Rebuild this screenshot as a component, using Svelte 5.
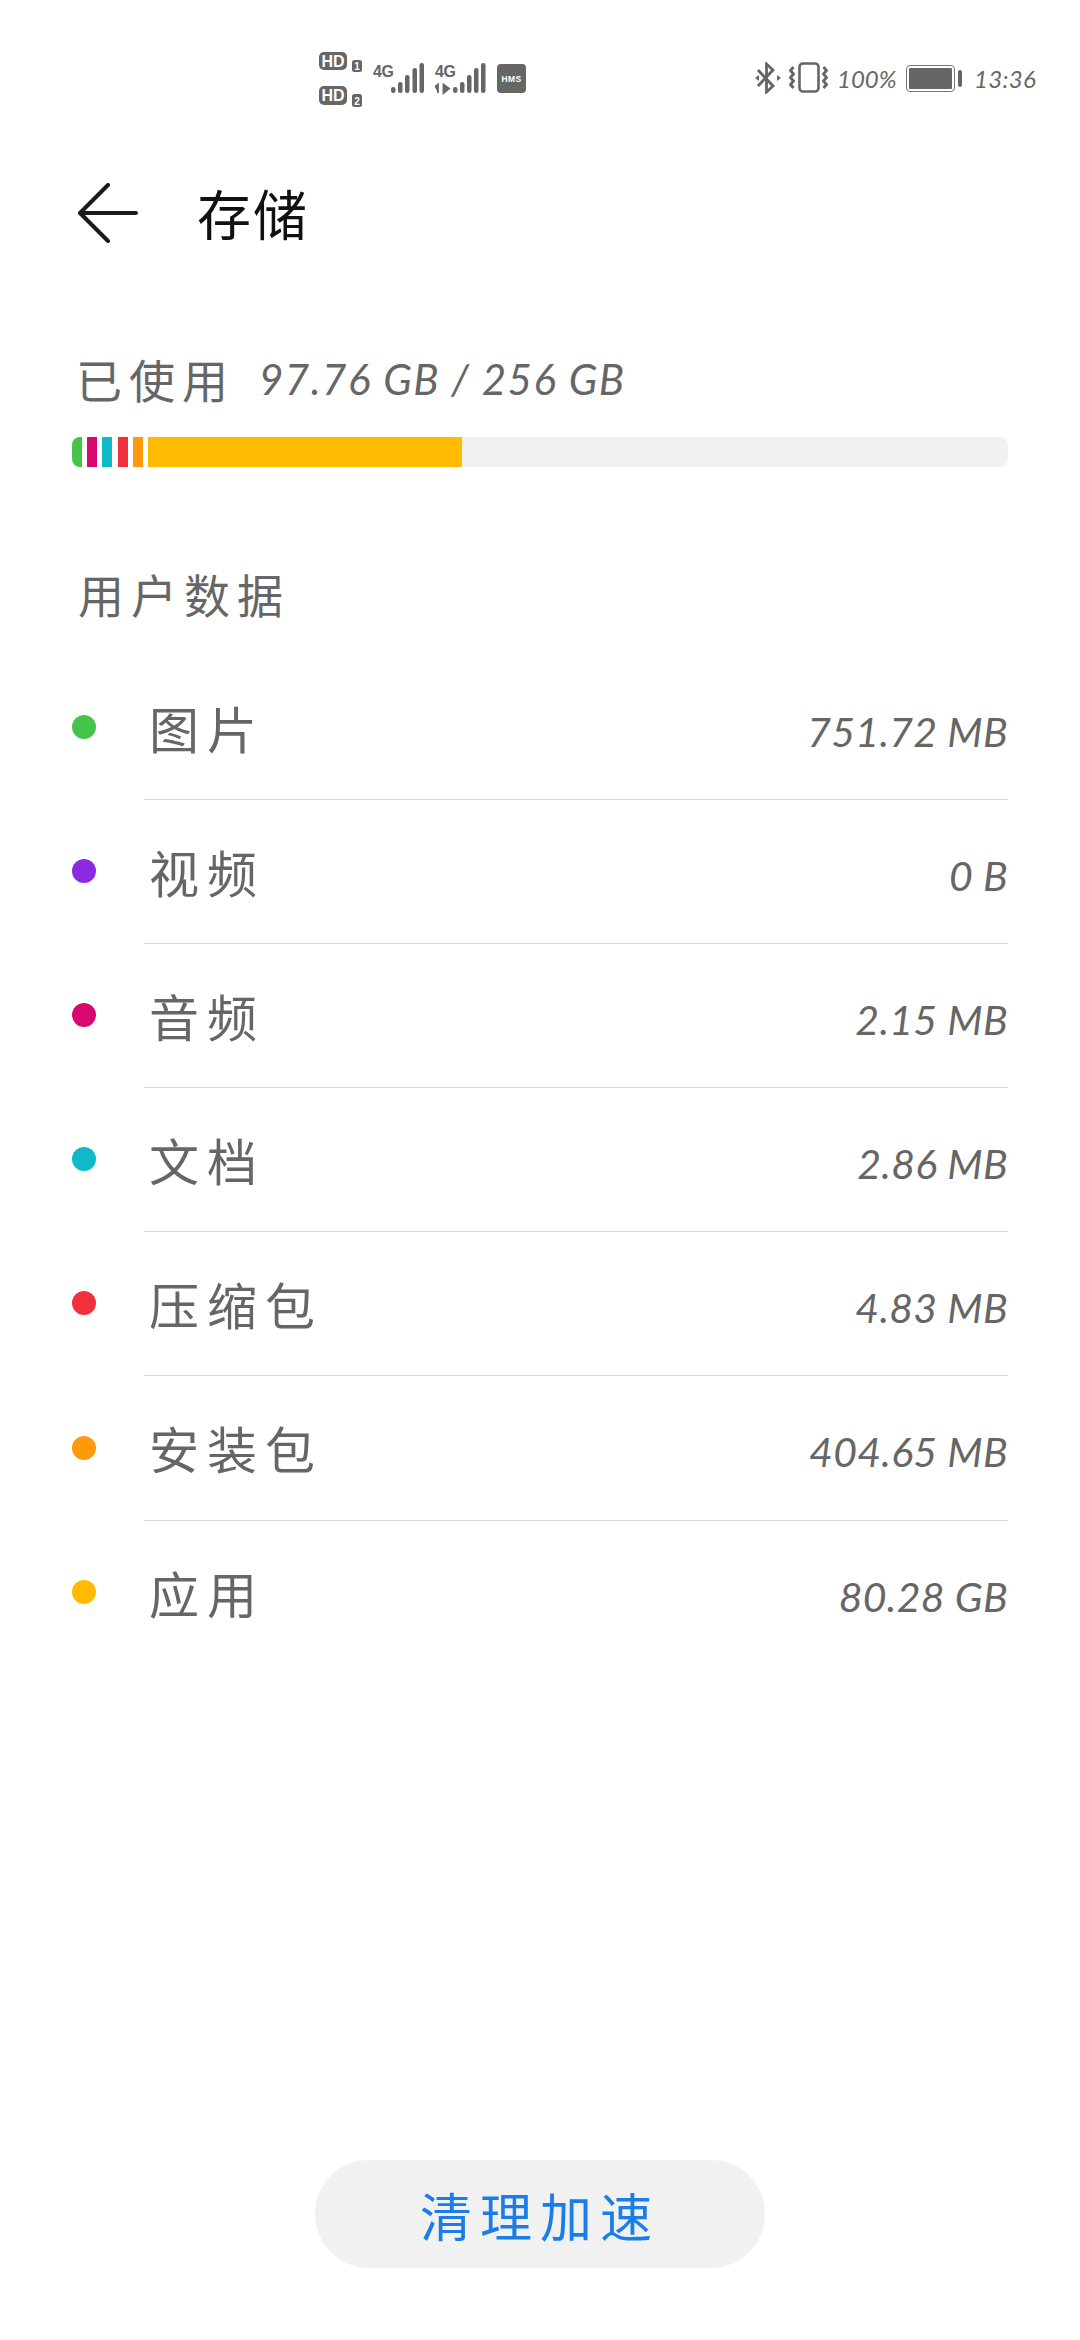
<script>
  const segs = [
    { c: '#45c34a', w: 10 },
    { c: '#d9086f', w: 10 },
    { c: '#0fb9c7', w: 10 },
    { c: '#f0303a', w: 10 },
    { c: '#ff9a0d', w: 10 },
    { c: '#ffbb00', w: 314 }
  ];
  const rows = [
    { c: '#45c34a', n: '图片', v: '751.72 MB' },
    { c: '#8a2be2', n: '视频', v: '0 B' },
    { c: '#d9086f', n: '音频', v: '2.15 MB' },
    { c: '#0fb9c7', n: '文档', v: '2.86 MB' },
    { c: '#f0303a', n: '压缩包', v: '4.83 MB' },
    { c: '#ff9a0d', n: '安装包', v: '404.65 MB' },
    { c: '#ffbb00', n: '应用', v: '80.28 GB' }
  ];
</script>

<div class="page">
  <div class="status">
    <svg class="sig" width="212" height="60" viewBox="0 0 212 60">
      <rect x="0" y="1" width="28" height="18" rx="5" fill="#666" />
      <text x="14" y="15.500" class="t hd">HD</text>
      <rect x="33" y="9" width="10" height="12" rx="2.5" fill="#666" />
      <text x="38" y="19" class="t small">1</text>
      <rect x="0" y="35" width="28" height="19" rx="5" fill="#666" />
      <text x="14" y="50" class="t hd">HD</text>
      <rect x="33" y="43" width="10" height="13" rx="2.5" fill="#666" />
      <text x="38" y="53.500" class="t small">2</text>

      <text x="54" y="26" class="g">4G</text>
      <g fill="#666">
        <rect x="72" y="36" width="4.500" height="6" rx="2.200" />
        <rect x="79" y="31" width="4.500" height="11" rx="2.200" />
        <rect x="86" y="24" width="4.500" height="18" rx="2.200" />
        <rect x="93.500" y="17" width="4.500" height="25" rx="2.200" />
        <rect x="100.500" y="12" width="4.500" height="30" rx="2.200" />
      </g>

      <text x="116" y="26" class="g">4G</text>
      <path d="M116 36l3-2.500V42M124.500 33.500v8.500l5.500-4.500z" fill="#666" stroke="#666" stroke-width="1.800" />
      <g fill="#666">
        <rect x="134" y="36" width="4.500" height="6" rx="2.200" />
        <rect x="141" y="31" width="4.500" height="11" rx="2.200" />
        <rect x="148" y="24" width="4.500" height="18" rx="2.200" />
        <rect x="155" y="17" width="4.500" height="25" rx="2.200" />
        <rect x="162" y="12" width="4.500" height="30" rx="2.200" />
      </g>

      <rect x="178" y="13" width="29" height="29" rx="4" fill="#666" />
      <text x="192.500" y="30.500" class="t hms">HMS</text>
    </svg>

    <div class="sright">
      <svg class="ic" width="26" height="32" viewBox="0 0 26 32" fill="none" stroke="#666" stroke-width="2.800">
        <path d="M3 8l15 16-6.500 6V2L18 8 3 24" />
        <path d="M0 16l4-3v6zM26 16l-4-3v6z" fill="#666" stroke="none" />
      </svg>
      <svg class="vib" width="40" height="32" viewBox="0 0 40 32" fill="none" stroke="#666">
        <rect x="10.500" y="1.500" width="19" height="28" rx="3.500" stroke-width="2.600" />
        <path d="M4.500 5L1.500 8.500L4.500 12L1.500 15.500L4.500 19L1.500 22.500L4.500 26" stroke-width="2.800" />
        <path d="M34.500 5L37.500 8.500L34.500 12L37.500 15.500L34.500 19L37.500 22.500L34.500 26" stroke-width="2.800" />
      </svg>
      <span class="pct">100%</span>
      <div class="batt"><div class="cell"><div class="charge"></div></div><div class="nub"></div></div>
      <span class="time">13:36</span>
    </div>
  </div>

  <header class="head">
    <svg width="60" height="60" viewBox="0 0 60 60" fill="none" stroke="#1a1a1a" stroke-width="4" stroke-linecap="round" stroke-linejoin="round">
      <path d="M30 2L2 30 30 58M2 30H58" />
    </svg>
    <h1>存储</h1>
  </header>

  <div class="used">
    <span class="cjk">已使用</span><span class="latin">97.76 GB / 256 GB</span>
  </div>

  <div class="bar">
    <div class="segs">
      {#each segs as s}
        <div class="seg" style="background:{s.c};width:{s.w}px"></div>
      {/each}
    </div>
    <div class="rest"></div>
  </div>

  <div class="section">用户数据</div>

  <ul class="list">
    {#each rows as r}
      <li class="row">
        <span class="dot" style="background:{r.c}"></span>
        <div class="body">
          <span class="name">{r.n}</span>
          <span class="val">{r.v}</span>
        </div>
      </li>
    {/each}
  </ul>

  <button class="clean">清理加速</button>
</div>

<style>
  :global(body) { margin: 0; background: #fff; }
  .page {
    width: 1080px;
    height: 2340px;
    box-sizing: border-box;
    display: flex;
    flex-direction: column;
    font-family: "Noto Sans CJK SC", "Noto Sans", sans-serif;
    color: #666;
    overflow: hidden;
  }
  .status {
    height: 110px;
    box-sizing: border-box;
    padding: 51px 45px 0 319px;
    display: flex;
    justify-content: space-between;
    align-items: flex-start;
  }
  .sig { display: block; }
  .t { fill: #fff; font-family: "Liberation Sans", sans-serif; font-weight: 700; text-anchor: middle; }
  .hd { font-size: 16px; }
  .small { font-size: 10px; }
  .hms { font-size: 8.500px; letter-spacing: 0.4px; }
  .g { fill: #666; font-family: "Liberation Sans", sans-serif; font-weight: 700; font-size: 16px; letter-spacing: -0.5px; }
  .sright {
    display: flex;
    align-items: center;
    height: 32px;
    margin-top: 11px;
  }
  .ic, .vib { flex: none; }
  .vib { margin-left: 8px; }
  .pct {
    flex: none;
    margin-left: 8px;
    width: 56px;
    font: italic 400 24px "Lato", sans-serif;
    white-space: nowrap;
  }
  .batt { flex: none; display: flex; align-items: center; margin-left: 13px; }
  .cell {
    width: 49px;
    height: 27px;
    box-sizing: border-box;
    border: 1.500px solid #777;
    border-radius: 4px;
    padding: 2px;
  }
  .charge { height: 100%; background: #666; border-radius: 1px; }
  .nub { width: 4px; height: 17px; margin-left: 3px; background: #666; border-radius: 2px; }
  .time {
    flex: none;
    margin-left: 12px;
    width: 61px;
    font: italic 400 24px "Lato", sans-serif;
    letter-spacing: 0.3px;
    white-space: nowrap;
  }
  .head {
    height: 60px;
    margin-top: 73px;
    padding-left: 78px;
    display: flex;
    align-items: center;
  }
  h1 {
    margin: 0 0 0 59px;
    font-size: 54px;
    font-weight: 400;
    line-height: 60px;
    letter-spacing: 2px;
    color: #111;
  }
  .used {
    margin-top: 109px;
    padding-left: 76px;
    height: 52px;
    display: flex;
    align-items: center;
  }
  .cjk { font-size: 46px; letter-spacing: 7px; line-height: 52px; }
  .latin {
    margin-left: 24px;
    margin-top: 2px;
    font: italic 400 42px "Lato", sans-serif;
    letter-spacing: 1.500px;
  }
  .bar {
    margin: 33px 72px 0;
    height: 30px;
    border-radius: 8px;
    overflow: hidden;
    display: flex;
  }
  .segs { display: flex; gap: 5.200px; }
  .seg { height: 100%; }
  .rest { flex: 1; background: #f1f1f1; }
  .section {
    margin-top: 100px;
    padding-left: 78px;
    font-size: 46px;
    line-height: 52px;
    letter-spacing: 7px;
  }
  .list { list-style: none; margin: 37px 0 0; padding: 0 72px; }
  .row { display: flex; align-items: center; height: 144.100px; }
  .dot { width: 24px; height: 24px; border-radius: 50%; flex: none; margin-right: 48px; margin-top: -2px; }
  .body {
    flex: 1;
    height: 100%;
    box-sizing: border-box;
    display: flex;
    align-items: center;
    justify-content: space-between;
    border-bottom: 1.500px solid #d4d4d4;
  }
  .row:last-child .body { border-bottom: 0; }
  .name { font-size: 50px; letter-spacing: 8px; margin-left: 5px; margin-top: -2px; }
  .val { font: italic 400 41px "Lato", sans-serif; letter-spacing: 0.3px; color: #666; margin-top: 7px; }
  .clean {
    align-self: center;
    margin-top: auto;
    margin-bottom: 72px;
    width: 450px;
    height: 108px;
    border: 0;
    padding: 0;
    border-radius: 54px;
    background: #f1f1f1;
    color: #1a7de8;
    font-family: inherit;
    font-size: 52px;
    letter-spacing: 8px;
  }
</style>
